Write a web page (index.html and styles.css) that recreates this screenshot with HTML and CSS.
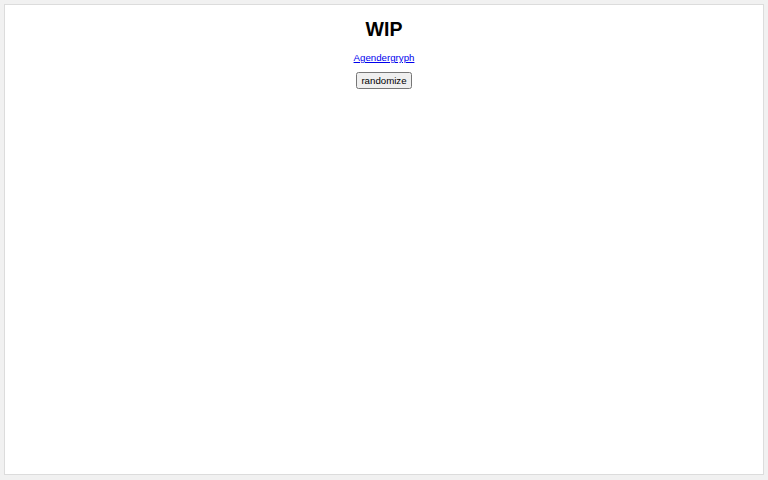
FILE: index.html
```html
<!DOCTYPE html>
<html>
<head>
<meta charset="utf-8">
<link rel="stylesheet" href="styles.css">
</head>
<body>
<div class="frame">
  <h1 class="title">WIP</h1>
  <p class="links"><a href="#">Agendergryph</a></p>
  <p class="actions"><button class="btn">randomize</button></p>
</div>
</body>
</html>
```
FILE: styles.css
```css
html, body { margin: 0; padding: 0; }
body {
  background: #f1f1f1;
  padding: 4px;
  font-family: "Liberation Sans", Arial, sans-serif;
}
.frame {
  box-sizing: border-box;
  width: 760px;
  height: 471px;
  background: #fff;
  border: 1px solid #dcdcdc;
  text-align: center;
  padding-top: 14px;
}
.title {
  margin: 0;
  font-size: 19.5px;
  font-weight: bold;
  line-height: 20px;
  color: #000;
}
.links {
  margin: 13px 0 0;
  font-size: 9.7px;
  line-height: 12px;
}
.links a { color: #00e; }
.actions { margin: 6px 0 0; }
.btn {
  font-family: "Liberation Sans", Arial, sans-serif;
  font-size: 9.7px;
  padding: 1px 3px;
  line-height: 11px;
}
```
